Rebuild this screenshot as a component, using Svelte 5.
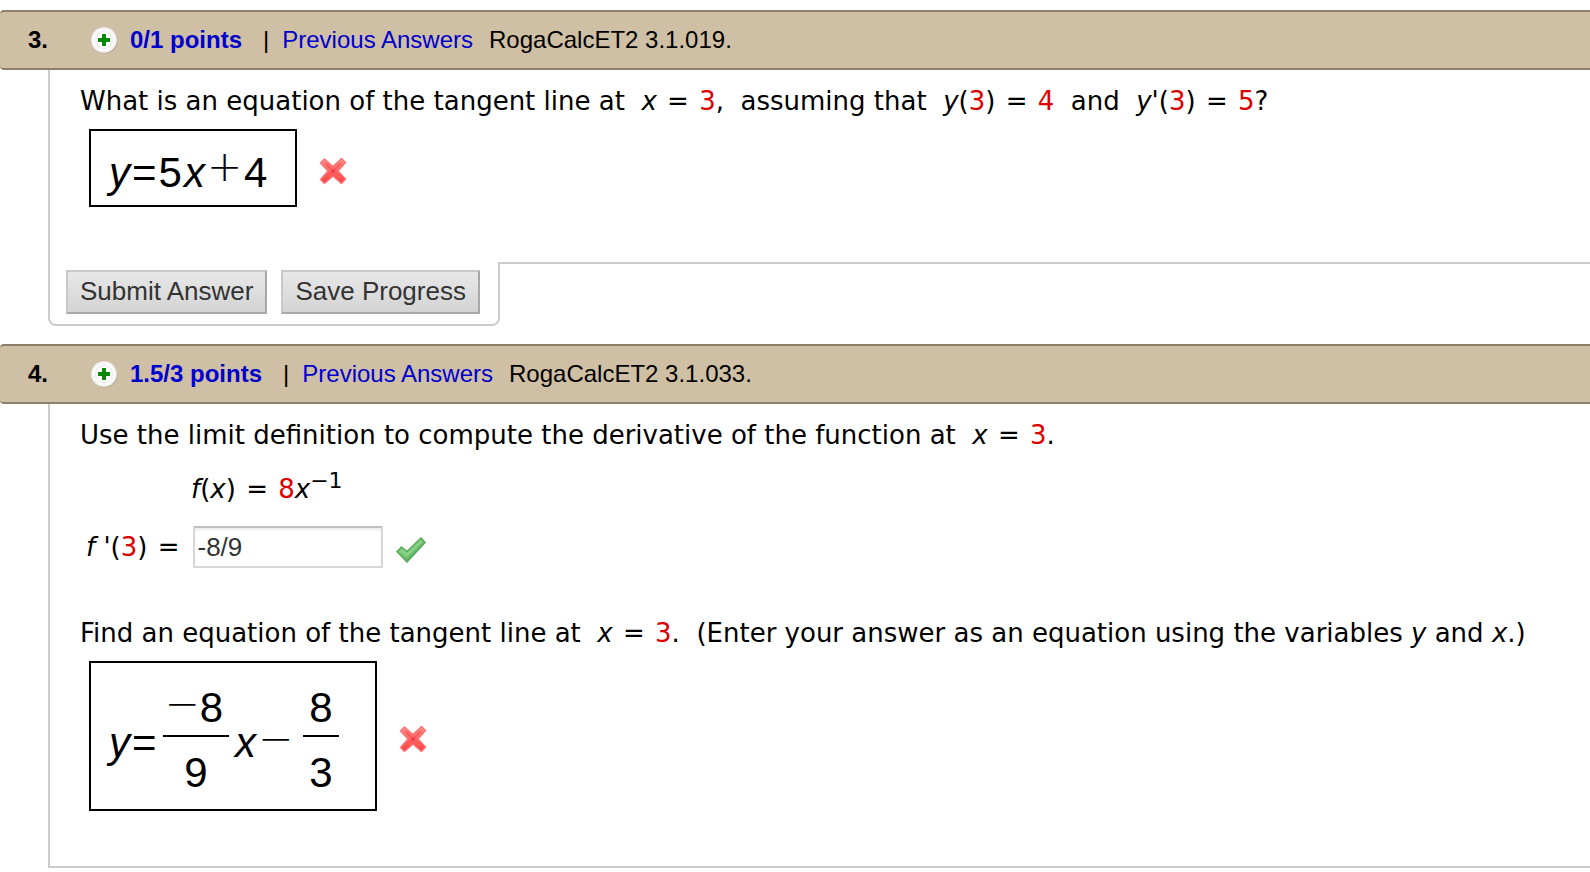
<script lang="ts">
  let derivative = $state('-8/9');
</script>

{#snippet header(num: string, points: string, source: string)}
  <header class="question-header">
    <span class="number">{num}.</span>
    <svg class="plus" width="28" height="28" viewBox="0 0 28 28" aria-hidden="true">
      <circle cx="15" cy="15" r="12.5" fill="#a99d87" opacity="0.7" />
      <circle cx="14" cy="14" r="12.8" fill="#f4f4f4" />
      <circle cx="14" cy="14" r="10.5" fill="#fff" />
      <circle cx="14" cy="14" r="8.5" fill="none" stroke="#ececec" stroke-width="1.5" />
      <path d="M12 8h4v4h4v4h-4v4h-4v-4H8v-4h4z" fill="#0a8a0a" />
    </svg>
    <a class="points" href="#points">{points} points</a>
    <span class="divider">|</span>
    <a class="previous" href="#previous">Previous Answers</a>
    <span>{source}</span>
  </header>
{/snippet}

{#snippet wrong()}
  <svg class="mark" width="28" height="28" viewBox="0 0 28 28" role="img" aria-label="Incorrect">
    <defs>
      <linearGradient id="red" x1="0" y1="0" x2="0" y2="1">
        <stop offset="0" stop-color="#ff9090" />
        <stop offset="1" stop-color="#fb3c3c" />
      </linearGradient>
    </defs>
    <path
      d="M5.500 2 14 9.500 22.500 1.500 26.500 5.500 19 14 26.500 22 22.500 26.500 14 19 5.500 26.500 1.500 22.500 9 14 1.500 6z"
      fill="url(#red)" stroke="#ff7474" stroke-width="1.500" stroke-linejoin="round"
    />
    <path d="M7 7 21 21M21 7 7 21" fill="none" stroke="#ff5a5a" stroke-width="2" stroke-linecap="round" />
    <circle cx="14" cy="14" r="2" fill="#f04444" />
  </svg>
{/snippet}

<main>
  <section>
    {@render header('3', '0/1', 'RogaCalcET2 3.1.019.')}
    <div class="body first">
      <p>
        What is an equation of the tangent line at &nbsp;<i>x</i> <span class="eq">=</span> <b>3</b>,&nbsp; assuming that
        &nbsp;<i>y</i>(<b>3</b>) <span class="eq">=</span> <b>4</b>&nbsp; and
        &nbsp;<i>y'</i>(<b>3</b>) <span class="eq">=</span> <b>5</b>?
      </p>
      <div class="answer">
        <div class="formula">
          <i>y</i><span>=</span><span>5</span><i>x</i><span class="op">+</span><span>4</span>
        </div>
        {@render wrong()}
      </div>
    </div>
    <div class="actions">
      <div class="tab">
        <button type="button">Submit Answer</button>
        <button type="button">Save Progress</button>
      </div>
      <div class="edge"></div>
    </div>
  </section>

  <section>
    {@render header('4', '1.5/3', 'RogaCalcET2 3.1.033.')}
    <div class="body last">
      <p>
        Use the limit definition to compute the derivative of the function at
        &nbsp;<i>x</i> <span class="eq">=</span> <b>3</b>.
      </p>
      <p class="function"><i>f</i>(<i>x</i>) <span class="eq">=</span> <b>8</b><i>x</i><sup>−1</sup></p>
      <div class="entry">
        <label for="derivative"><i>f '</i>(<b>3</b>) <span class="eq">=</span></label>
        <input id="derivative" type="text" bind:value={derivative} />
        <svg width="30" height="26" viewBox="0 0 30 26" role="img" aria-label="Correct">
          <defs>
            <linearGradient id="green" x1="0" y1="0" x2="1" y2="1">
              <stop offset="0" stop-color="#86d486" />
              <stop offset="0.5" stop-color="#6fc26f" />
              <stop offset="1" stop-color="#4d9f4d" />
            </linearGradient>
          </defs>
          <path
            d="M1 14.500 5.500 10 11 14.500 25 1 29 5.500 11 25z"
            fill="url(#green)" stroke="#5aa65a" stroke-width="1.500" stroke-linejoin="round"
          />
          <path d="M5 13 11 18 25.500 4" fill="none" stroke="#86d286" stroke-width="3" />
        </svg>
      </div>
      <p class="followup">
        Find an equation of the tangent line at &nbsp;<i>x</i> <span class="eq">=</span> <b>3</b>.&nbsp; (Enter your
        answer as an equation using the variables <i>y</i> and <i>x</i>.)
      </p>
      <div class="answer">
        <div class="formula tall">
          <i>y</i><span>=</span>
          <span class="fraction wide">
            <span class="top"><span class="op minus">−</span><span>8</span></span>
            <span class="bottom">9</span>
          </span>
          <i>x</i><span class="op minus">−</span>
          <span class="fraction">
            <span class="top">8</span>
            <span class="bottom">3</span>
          </span>
        </div>
        {@render wrong()}
      </div>
    </div>
  </section>
</main>

<style>
  :global(body) {
    background: #fff;
  }

  main {
    padding-top: 10px;
    color: #000;
    font-family: Verdana, 'DejaVu Sans', sans-serif;
    font-size: 26px;
    line-height: 32px;
  }

  .question-header {
    display: flex;
    align-items: center;
    box-sizing: border-box;
    height: 60px;
    padding-left: 28px;
    background: #cfbfa4;
    border-top: 2px solid #8d806a;
    border-bottom: 2px solid #8d806a;
    border-radius: 4px 0 0 4px;
    font-family: Arial, 'Liberation Sans', sans-serif;
    font-size: 24px;
    line-height: 28px;
    white-space: nowrap;
  }

  .number {
    width: 62px;
    font-weight: bold;
  }

  .plus {
    margin-right: 12px;
  }

  a {
    color: #0000cc;
    text-decoration: none;
  }

  .points {
    font-weight: bold;
  }

  .divider {
    margin: 0 13px 0 21px;
  }

  .previous {
    margin-right: 16px;
  }

  .body {
    padding: 15px 16px 55px 30px;
    margin-left: 48px;
    border-left: 2px solid #ccc;
  }

  .last {
    border-bottom: 2px solid #ccc;
  }

  p {
    margin: 0;
  }

  b {
    color: #d00;
    font-weight: normal;
  }

  .eq {
    margin: 0 2px;
  }

  .answer {
    display: flex;
    align-items: center;
    gap: 22px;
    margin: 12px 0 0 9px;
  }

  .mark {
    margin-top: 6px;
  }

  .formula {
    display: flex;
    align-items: center;
    gap: 2px;
    padding: 18px 28px 8px 18px;
    border: 2px solid #000;
    font-family: Arial, 'Liberation Sans', sans-serif;
    font-size: 42px;
    line-height: 48px;
  }

  .tall {
    padding: 21px 32px 12px 18px;
  }

  .tall > i,
  .tall > span:not(.fraction) {
    padding-top: 4px;
  }

  .op {
    margin-bottom: 12px;
    font-family: 'DejaVu Sans Light', 'DejaVu Sans', sans-serif;
    font-weight: 200;
    line-height: 24px;
  }

  .minus {
    margin-bottom: 8px;
  }

  .tall > .minus {
    margin-right: 4px;
  }

  .fraction {
    display: flex;
    flex-direction: column;
    margin: 0 4px;
  }

  .top,
  .bottom {
    display: flex;
    align-items: center;
    justify-content: center;
    padding: 0 6px;
  }

  .top {
    padding-bottom: 3px;
    border-bottom: 2px solid #000;
  }

  .bottom {
    padding-top: 12px;
  }

  .wide .top {
    padding-left: 2px;
  }

  .actions {
    display: flex;
    margin-bottom: 18px;
  }

  .tab {
    display: flex;
    gap: 14px;
    margin-left: 48px;
    padding: 8px 18px 10px 16px;
    border: 2px solid #ccc;
    border-top: none;
    border-radius: 0 0 8px 8px;
  }

  .edge {
    flex: 1;
    border-top: 2px solid #ccc;
  }

  button {
    height: 44px;
    padding: 0 12px 2px;
    background: linear-gradient(#e8e8e8, #d4d4d4);
    border: 2px solid;
    border-color: #c8c8c8 #a8a8a8 #a8a8a8 #c8c8c8;
    color: #333;
    font-family: Arial, 'Liberation Sans', sans-serif;
    font-size: 26px;
  }

  .function {
    margin: 22px 0 0 111px;
  }

  sup {
    font-size: 22px;
    line-height: 0;
    vertical-align: 10px;
  }

  .entry {
    display: flex;
    align-items: center;
    margin: 21px 0 0 6px;
  }

  .entry svg {
    margin-top: 6px;
  }

  input {
    box-sizing: border-box;
    width: 190px;
    height: 42px;
    margin: 0 13px 0 11px;
    padding: 0 3px;
    background: #fff;
    border: 2px solid #d8d8d8;
    border-top-color: #c0c0c0;
    box-shadow: inset 0 2px 2px #eee;
    color: #333;
    font-family: Arial, 'Liberation Sans', sans-serif;
    font-size: 26px;
  }

  .followup {
    margin-top: 49px;
  }
</style>
